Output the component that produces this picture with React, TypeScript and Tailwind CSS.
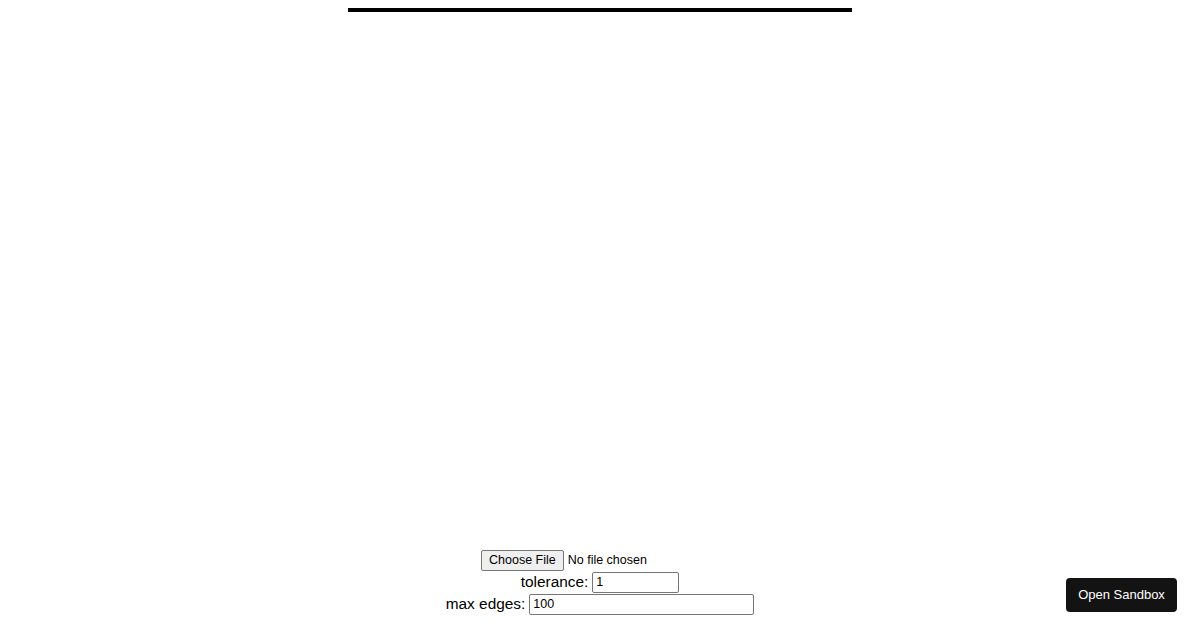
export default function App() {
  return (
    <div className="relative min-h-[630px] bg-white text-black font-['Liberation_Sans',Arial,sans-serif] text-[15.4px]">
      <div className="flex flex-col items-center">
        {/* canvas area */}
        <div className="mt-2 w-[504px] h-[541px]">
          <div className="h-1 w-full bg-black" />
        </div>

        <div className="flex flex-col items-center">
          <div className="flex h-[22px] w-[238px] items-center">
            <input
              type="file"
              className="text-[12.5px] w-full file:mr-1 file:h-[21px] file:rounded-[2px] file:border file:border-[#767676] file:bg-[#efefef] file:px-[7px] file:text-[12.5px] file:text-black"
            />
          </div>
          <div className="flex h-[22px] items-center gap-1">
            <span>tolerance:</span>
            <input
              type="text"
              defaultValue="1"
              className="h-[21px] w-[87px] rounded-[2px] border border-[#767676] px-[3px] text-[12.5px]"
            />
          </div>
          <div className="flex h-[22px] items-center gap-1">
            <span>max edges:</span>
            <input
              type="text"
              defaultValue="100"
              className="h-[21px] w-[225px] rounded-[2px] border border-[#767676] px-[3px] text-[12.5px]"
            />
          </div>
        </div>
      </div>

      <button className="absolute right-[23px] top-[578px] h-[34px] w-[111px] rounded-[4px] bg-[#131313] text-[13px] text-white font-['Liberation_Sans',Arial,sans-serif]">
        Open Sandbox
      </button>
    </div>
  );
}
